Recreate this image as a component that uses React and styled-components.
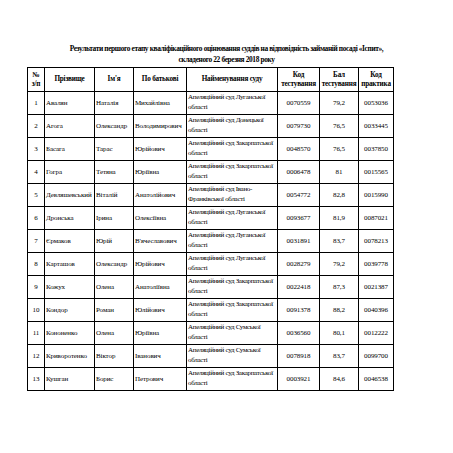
import styled, { createGlobalStyle } from "styled-components";

const GlobalStyle = createGlobalStyle`
  html, body {
    margin: 0;
    padding: 0;
    background: #fff;
  }
  body {
    font-family: "Liberation Serif", "Times New Roman", serif;
    color: #000;
  }
`;

const rows = [
  [1, "Авалян", "Наталія", "Михайлівна", "Апеляційний суд Луганської області", "0070559", "79,2", "0053036"],
  [2, "Агога", "Олександр", "Володимирович", "Апеляційний суд Донецької області", "0079730", "76,5", "0033445"],
  [3, "Басага", "Тарас", "Юрійович", "Апеляційний суд Закарпатської області", "0048570", "76,5", "0037850"],
  [4, "Гогра", "Тетяна", "Юріївна", "Апеляційний суд Закарпатської області", "0006478", "81", "0015565"],
  [5, "Девляшевський", "Віталій", "Анатолійович", "Апеляційний суд Івано-Франківської області", "0054772", "82,8", "0015990"],
  [6, "Дронська", "Ірина", "Олексіївна", "Апеляційний суд Луганської області", "0093677", "81,9", "0087021"],
  [7, "Єрмаков", "Юрій", "В'ячеславович", "Апеляційний суд Луганської області", "0031891", "83,7", "0078213"],
  [8, "Карташов", "Олександр", "Юрійович", "Апеляційний суд Луганської області", "0028279", "79,2", "0039778"],
  [9, "Кожух", "Олена", "Анатоліївна", "Апеляційний суд Закарпатської області", "0022418", "87,3", "0021387"],
  [10, "Кондор", "Роман", "Юлійович", "Апеляційний суд Закарпатської області", "0091378", "88,2", "0040396"],
  [11, "Кононенко", "Олена", "Юріївна", "Апеляційний суд Сумської області", "0036560", "80,1", "0012222"],
  [12, "Криворотенко", "Віктор", "Іванович", "Апеляційний суд Сумської області", "0078918", "83,7", "0099700"],
  [13, "Кушган", "Борис", "Петрович", "Апеляційний суд Закарпатської області", "0003921", "84,6", "0046538"],
];

const widths = [17, 50, 39, 53, 91, 42, 39, 35];

function App() {
  return (
    <>
      <GlobalStyle />
      <Page>
        <Title>
          Результати першого етапу кваліфікаційного оцінювання суддів на відповідність займаній посаді «Іспит»,
          <br />
          складеного 22 березня 2018 року
        </Title>
        <Table>
          <colgroup>
            {widths.map((w, i) => (
              <col key={i} style={{ width: w }} />
            ))}
          </colgroup>
          <thead>
            <tr>
              <Head>№<br />з/п</Head>
              <Head>Прізвище</Head>
              <Head>Ім'я</Head>
              <Head>По батькові</Head>
              <Head>Найменування суду</Head>
              <Head>Код<br />тестування</Head>
              <Head>Бал<br />тестування</Head>
              <Head>Код<br />практика</Head>
            </tr>
          </thead>
          <tbody>
            {rows.map((r) => (
              <Row key={r[0]}>
                <Cell $center>{r[0]}</Cell>
                <Cell>{r[1]}</Cell>
                <Cell>{r[2]}</Cell>
                <Cell>{r[3]}</Cell>
                <CourtCell>{r[4]}</CourtCell>
                <Cell $center>{r[5]}</Cell>
                <Cell $center>{r[6]}</Cell>
                <Cell $center>{r[7]}</Cell>
              </Row>
            ))}
          </tbody>
        </Table>
      </Page>
    </>
  );
}

const Page = styled.div`
  width: 453px;
  height: 453px;
  padding-top: 43px;
  box-sizing: border-box;
  display: flex;
  flex-direction: column;
`;

const Title = styled.div`
  width: 100%;
  text-align: center;
  font-weight: bold;
  font-size: 7.4px;
  line-height: 11px;
  letter-spacing: -0.38px;
  margin-bottom: 2px;
`;

const Table = styled.table`
  border-collapse: collapse;
  table-layout: fixed;
  width: 366px;
  margin-left: 27px;
  border: 1.5px solid #000;
`;

const Head = styled.th`
  border: 1px solid #000;
  height: 23px;
  padding: 0;
  font-size: 7.2px;
  line-height: 9px;
  font-weight: bold;
  text-align: center;
  vertical-align: middle;
  letter-spacing: -0.2px;
`;

const Row = styled.tr`
  height: 23px;
`;

const Cell = styled.td`
  border: 1px solid #000;
  padding: 0 1px;
  font-size: 7px;
  line-height: 9px;
  text-align: ${(p) => (p.$center ? "center" : "left")};
  vertical-align: middle;
  white-space: nowrap;
  overflow: hidden;
  letter-spacing: -0.1px;
`;

const CourtCell = styled.td`
  border: 1px solid #000;
  padding: 1px 0 0 1px;
  font-size: 7px;
  line-height: 9.5px;
  text-align: left;
  vertical-align: top;
  letter-spacing: -0.3px;
`;

export default App;
